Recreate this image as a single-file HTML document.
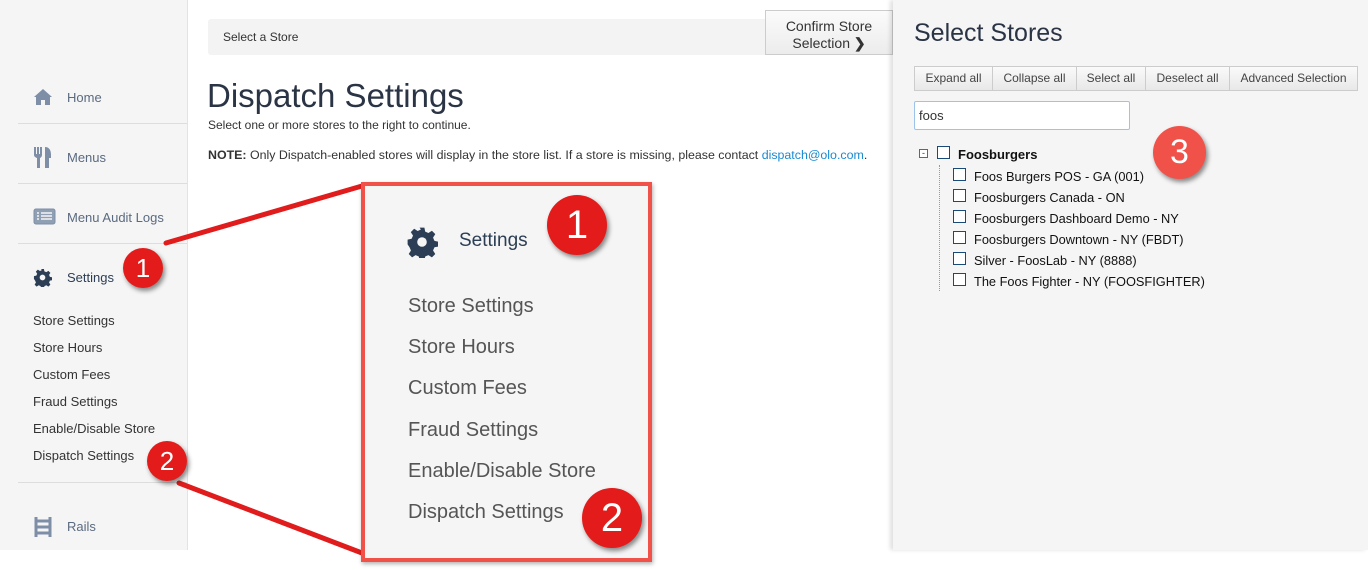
<!DOCTYPE html>
<html><head><style>
*{margin:0;padding:0;box-sizing:border-box}
body{width:1368px;height:570px;position:relative;overflow:hidden;background:#fff;font-family:"Liberation Sans",sans-serif;color:#333}
.abs{position:absolute}
#side{left:0;top:0;width:188px;height:550px;background:#f5f5f5;border-right:1px solid #e3e3e3}
.nav{position:absolute;left:67px;font-size:13px;color:#5a6a80}
.hr{position:absolute;left:18px;width:169px;height:1px;background:#ddd}
.sub{position:absolute;left:33px;font-size:13px;color:#333}
#right{left:893px;top:0;width:475px;height:550px;background:#f5f5f5;box-shadow:-3px 0 4px rgba(0,0,0,.12)}
.btn{position:absolute;top:66px;height:25px;border:1px solid #ccc;background:linear-gradient(#fafafa,#e8e8e8);font-size:12px;color:#444;line-height:23px;text-align:center}
.cb{position:absolute;width:13px;height:13px;border:1px solid #1a4a7a;background:#fff}
.item{position:absolute;left:974px;font-size:12.8px;color:#111}
.badge{position:absolute;border-radius:50%;background:#e31b1b;color:#fff;text-align:center;font-family:"Liberation Sans",sans-serif;box-shadow:2px 3px 5px rgba(0,0,0,.45)}
.zt{position:absolute;left:408px;font-size:20px;color:#555}
</style></head><body>
<div id="side" class="abs"></div>
<svg class="abs" style="left:33px;top:88px" width="20" height="18" viewBox="0 0 20 18"><path d="M10 1 L1 9 L3 9 L3 17 L8 17 L8 12 L12 12 L12 17 L17 17 L17 9 L19 9 Z" fill="#7d8ea6"/></svg>
<div class="nav" style="top:90px">Home</div>
<div class="hr" style="top:123px"></div>
<svg class="abs" style="left:33px;top:146px" width="20" height="22" viewBox="0 0 20 22"><path d="M1 1h2v7h1V1h2v7h1V1h2v8c0 2-2 3-2 3v10H4V12S1 11 1 9z M12 1c4 0 6 3 6 8v3h-2v10h-4z" fill="#7d8ea6"/></svg>
<div class="nav" style="top:150px">Menus</div>
<div class="hr" style="top:183px"></div>
<svg class="abs" style="left:33px;top:208px" width="23" height="17" viewBox="0 0 23 17"><rect x="1" y="1" width="21" height="15" rx="2" fill="#8fa0b5" stroke="#7d8ea6"/><path d="M4 5h2M8 5h11M4 8h2M8 8h11M4 11h2M8 11h11" stroke="#f5f5f5" stroke-width="1.5"/></svg>
<div class="nav" style="top:210px">Menu Audit Logs</div>
<div class="hr" style="top:243px"></div>
<svg class="abs" style="left:33px;top:268px" width="19" height="19" viewBox="0 0 20 20"><path d="M8.5 1h3l.5 2.5 2 .9 2.2-1.4 2.1 2.1-1.4 2.2.9 2 2.5.5v3l-2.5.5-.9 2 1.4 2.2-2.1 2.1-2.2-1.4-2 .9-.5 2.5h-3l-.5-2.5-2-.9-2.2 1.4-2.1-2.1 1.4-2.2-.9-2L1 11.5v-3l2.5-.5.9-2L3 3.8 5.1 1.7 7.3 3.1l2-.9z" fill="#2c3e55"/><circle cx="10" cy="10" r="3" fill="#f5f5f5"/></svg>
<div class="nav" style="top:270px;color:#2c3e55">Settings</div>
<div class="sub" style="top:313px">Store Settings</div>
<div class="sub" style="top:340px">Store Hours</div>
<div class="sub" style="top:367px">Custom Fees</div>
<div class="sub" style="top:394px">Fraud Settings</div>
<div class="sub" style="top:421px">Enable/Disable Store</div>
<div class="sub" style="top:448px">Dispatch Settings</div>
<div class="hr" style="top:482px"></div>
<svg class="abs" style="left:33px;top:516px" width="20" height="22" viewBox="0 0 20 22"><path d="M3 1v20M17 1v20M3 5h14M3 11h14M3 17h14" stroke="#7d8ea6" stroke-width="3"/></svg>
<div class="nav" style="top:519px">Rails</div>

<div class="abs" style="left:208px;top:19px;width:560px;height:36px;background:#f3f3f3;border-radius:3px;font-size:12px;line-height:36px;padding-left:15px">Select a Store</div>
<div class="abs" style="left:765px;top:10px;width:128px;height:45px;border:1px solid #ccc;background:linear-gradient(#fbfbfb,#ececec);font-size:14px;text-align:center;line-height:17px;padding-top:7px;color:#333">Confirm Store<br>Selection <b>&#x276F;</b></div>
<div class="abs" style="left:207px;top:77px;font-size:33px;color:#2a3444">Dispatch Settings</div>
<div class="abs" style="left:208px;top:118px;font-size:12px">Select one or more stores to the right to continue.</div>
<div class="abs" style="left:208px;top:148px;font-size:12.4px"><b>NOTE:</b> Only Dispatch-enabled stores will display in the store list. If a store is missing, please contact <span style="color:#1a8ad0">dispatch@olo.com</span>.</div>

<div id="right" class="abs"></div>
<div class="abs" style="left:914px;top:19px;font-size:25px;color:#2a3444">Select Stores</div>
<div class="btn" style="left:914px;width:79px">Expand all</div>
<div class="btn" style="left:992px;width:85px">Collapse all</div>
<div class="btn" style="left:1076px;width:70px">Select all</div>
<div class="btn" style="left:1145px;width:85px">Deselect all</div>
<div class="btn" style="left:1229px;width:129px">Advanced Selection</div>
<div class="abs" style="left:914px;top:101px;width:216px;height:29px;border:1px solid #9cc4ea;background:#fff;font-size:13px;line-height:27px;padding-left:4px;border-radius:2px">foos</div>
<div class="abs" style="left:919px;top:149px;width:9px;height:9px;border:1px solid #666;background:#fff;font-size:9px;line-height:6px;text-align:center">-</div>
<div class="abs" style="left:939px;top:165px;height:126px;border-left:1px dotted #999"></div>
<div class="cb" style="left:937px;top:146px"></div>
<div class="abs" style="left:958px;top:147px;font-size:13px;font-weight:bold;color:#111">Foosburgers</div>
<div class="cb" style="left:953px;top:168px"></div><div class="item" style="top:169px">Foos Burgers POS - GA (001)</div>
<div class="cb" style="left:953px;top:189px"></div><div class="item" style="top:190px">Foosburgers Canada - ON</div>
<div class="cb" style="left:953px;top:210px"></div><div class="item" style="top:211px">Foosburgers Dashboard Demo - NY</div>
<div class="cb" style="left:953px;top:231px"></div><div class="item" style="top:232px">Foosburgers Downtown - NY (FBDT)</div>
<div class="cb" style="left:953px;top:252px"></div><div class="item" style="top:253px">Silver - FoosLab - NY (8888)</div>
<div class="cb" style="left:953px;top:273px"></div><div class="item" style="top:274px">The Foos Fighter - NY (FOOSFIGHTER)</div>

<svg class="abs" style="left:0;top:0" width="1368" height="570"><g stroke="#e01c1c" stroke-width="5" stroke-linecap="round"><line x1="166" y1="243" x2="362" y2="186"/><line x1="179" y1="483" x2="362" y2="553"/></g></svg>
<div class="abs" style="left:361px;top:182px;width:291px;height:380px;border:4px solid #f0524a;background:#f5f5f5;box-shadow:1px 2px 4px rgba(0,0,0,.3)"></div>
<svg class="abs" style="left:406px;top:226px" width="32" height="32" viewBox="0 0 20 20"><path d="M8.5 1h3l.5 2.5 2 .9 2.2-1.4 2.1 2.1-1.4 2.2.9 2 2.5.5v3l-2.5.5-.9 2 1.4 2.2-2.1 2.1-2.2-1.4-2 .9-.5 2.5h-3l-.5-2.5-2-.9-2.2 1.4-2.1-2.1 1.4-2.2-.9-2L1 11.5v-3l2.5-.5.9-2L3 3.8 5.1 1.7 7.3 3.1l2-.9z" fill="#2c3e55"/><circle cx="10" cy="10" r="3" fill="#f5f5f5"/></svg>
<div class="zt" style="left:459px;top:230px;font-size:19px;color:#2c3e55">Settings</div>
<div class="zt" style="top:295px">Store Settings</div>
<div class="zt" style="top:336px">Store Hours</div>
<div class="zt" style="top:377px">Custom Fees</div>
<div class="zt" style="top:419px">Fraud Settings</div>
<div class="zt" style="top:460px">Enable/Disable Store</div>
<div class="zt" style="top:501px">Dispatch Settings</div>

<div class="badge" style="left:123px;top:248px;width:40px;height:40px;font-size:26px;line-height:40px">1</div>
<div class="badge" style="left:147px;top:441px;width:40px;height:40px;font-size:26px;line-height:40px">2</div>
<div class="badge" style="left:547px;top:195px;width:60px;height:60px;font-size:40px;line-height:60px">1</div>
<div class="badge" style="left:582px;top:488px;width:60px;height:60px;font-size:40px;line-height:60px">2</div>
<div class="badge" style="left:1153px;top:126px;width:53px;height:53px;font-size:34px;line-height:53px;background:#f0524a">3</div>
</body></html>
